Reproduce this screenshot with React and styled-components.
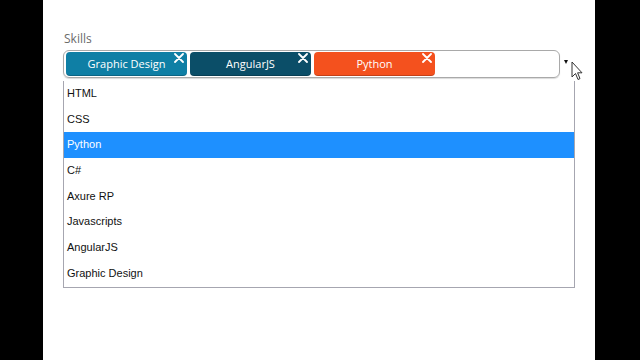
import React from "react";
import styled, { createGlobalStyle } from "styled-components";

const GlobalStyle = createGlobalStyle`
   html, body {
      margin: 0;
      padding: 0;
      background: #000;
   }
`;

const Screen = styled.div`
   width: 640px;
   height: 360px;
   display: flex;
   justify-content: flex-start;
   padding-left: 43px;
   box-sizing: border-box;
   background: #000;
`;

const Panel = styled.div`
   width: 552px;
   height: 360px;
   background: #fff;
   padding: 30px 0 0 20px;
   box-sizing: border-box;
   position: relative;
`;

const Label = styled.div`
   font-family: "Open Sans", "Liberation Sans", sans-serif;
   font-size: 12px;
   color: #6b6b6b;
   height: 18px;
   line-height: 18px;
   padding-left: 1px;
`;

const SelectRow = styled.div`
   display: flex;
   align-items: center;
   margin-top: 2px;
`;

const SelectBox = styled.div`
   width: 497px;
   height: 28px;
   box-sizing: border-box;
   border: 1px solid #a9a9a9;
   border-radius: 6px;
   display: flex;
   align-items: center;
   gap: 3px;
   padding: 0 2px;
   box-shadow: 0 1px 1px rgba(0, 0, 0, 0.15);
`;

const Tag = styled.div`
   position: relative;
   width: 121px;
   height: 24px;
   border-radius: 4px;
   background: ${(p) => p.$color};
   color: #fff;
   font-family: "Open Sans", "Liberation Sans", sans-serif;
   font-size: 11px;
   display: flex;
   align-items: center;
   justify-content: center;
   box-sizing: border-box;
   border-bottom: 1px solid rgba(0, 0, 0, 0.2);
`;

const Close = styled.span`
   position: absolute;
   top: 1px;
   right: 3px;
   width: 10px;
   height: 10px;
   display: flex;
`;

const Arrow = styled.div`
   margin-left: 4px;
   width: 0;
   height: 0;
   border-left: 2.5px solid transparent;
   border-right: 2.5px solid transparent;
   border-top: 4px solid #111;
   margin-top: -4px;
`;

const List = styled.ul`
   list-style: none;
   margin: 3px 0 0 0;
   padding: 0;
   width: 512px;
   box-sizing: border-box;
   border: 1px solid #a6a6b0;
   border-top: none;
`;

const Item = styled.li`
   height: 25.7px;
   line-height: 25.7px;
   padding-left: 3px;
   font-family: "Liberation Sans", Arial, sans-serif;
   font-size: 11px;
   color: ${(p) => (p.$active ? "#fff" : "#111")};
   background: ${(p) => (p.$active ? "#1e90ff" : "#fff")};
`;

const Cursor = styled.svg`
   position: absolute;
   left: 528px;
   top: 61px;
`;

const tags = [
   { name: "Graphic Design", color: "#0f7fa5" },
   { name: "AngularJS", color: "#0b4e68" },
   { name: "Python", color: "#f4511e" },
];

const options = ["HTML", "CSS", "Python", "C#", "Axure RP", "Javascripts", "AngularJS", "Graphic Design"];

const X = () => (
   <svg width="10" height="10" viewBox="0 0 10 10">
      <path d="M1 1 L9 9 M9 1 L1 9" stroke="#fff" strokeWidth="1.8" strokeLinecap="round" />
   </svg>
);

export default function App() {
   return (
      <Screen>
         <GlobalStyle />
         <Panel>
            <Label>Skills</Label>
            <SelectRow>
               <SelectBox>
                  {tags.map((t) => (
                     <Tag key={t.name} $color={t.color}>
                        {t.name}
                        <Close>
                           <X />
                        </Close>
                     </Tag>
                  ))}
               </SelectBox>
               <Arrow />
            </SelectRow>
            <List>
               {options.map((o) => (
                  <Item key={o} $active={o === "Python"}>
                     {o}
                  </Item>
               ))}
            </List>
            <Cursor width="12" height="20" viewBox="0 0 12 20">
               <path d="M1 1 L1 16 L4.5 12.5 L7 18.5 L9 17.6 L6.6 11.8 L11 11.8 Z" fill="#fff" stroke="#333" strokeWidth="1" strokeLinejoin="round" />
            </Cursor>
         </Panel>
      </Screen>
   );
}
